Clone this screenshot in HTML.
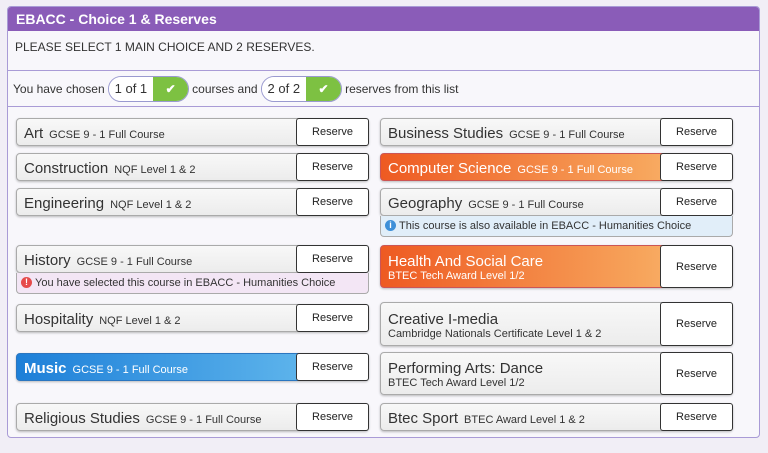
<!DOCTYPE html>
<html><head><style>
*{box-sizing:border-box;margin:0;padding:0}
body{width:768px;height:453px;background:#f1eef6;font-family:"Liberation Sans",sans-serif;position:relative;overflow:hidden}
.panel{position:absolute;left:7px;top:6px;width:753px;height:432px;border:1px solid #a99bd6;border-radius:4px;background:#f8f7fb;overflow:hidden}
.hdr{height:24px;background:#8a5cb8;color:#fff;font-weight:bold;font-size:14px;line-height:24px;padding-left:8px}
.instr{height:40px;border-bottom:1px solid #a99bd6;font-size:12px;color:#333;padding:9px 0 0 7px}
.cnt{height:36px;border-bottom:1px solid #a99bd6;font-size:12px;color:#333;display:flex;align-items:center;padding-left:5px}
.pill{display:inline-flex;height:26px;border:1px solid #9a9ad0;border-radius:13px;overflow:hidden;margin:0 3px;align-items:stretch}
.pill span{padding:0 6px;line-height:24px;font-size:13px;background:#fff}
.pill b{width:35px;background:#7dc142;color:#fff;text-align:center;line-height:24px;font-size:12px}
.card{position:absolute;height:28px;width:353px;border:1px solid #aaa;border-radius:4px;background:linear-gradient(#f8f8f8,#ececec);box-shadow:0 1px 2px rgba(0,0,0,.25)}
.t{position:absolute;left:7px;top:6px;font-size:15px;color:#333;white-space:nowrap}
.t small{font-size:11px;margin-left:6px}
.t2{position:absolute;left:7px;top:20px;font-size:11px;color:#333;white-space:nowrap}
.r{position:absolute;right:-1px;top:-1px;bottom:-1px;width:73px;background:#fff;border:1px solid #333;border-radius:3px;font-size:11px;color:#222;display:flex;align-items:center;justify-content:center}
.or{background:linear-gradient(90deg,#ee5a22,#f7a55c 75%,#fbc07a);border-color:#c55}
.or .t,.or .t2,.bl .t{color:#fff}
.bl{background:linear-gradient(90deg,#1d7fd8,#6cc0f0);border-color:#2b76c0}
.note{position:absolute;height:21px;width:353px;border:1px solid #aaa;border-top:none;border-radius:0 0 4px 4px;font-size:11px;color:#333;line-height:20px;padding-left:18px}
.note i{position:absolute;left:4px;top:4px;width:11px;height:11px;border-radius:50%;color:#fff;font-size:9px;line-height:11px;text-align:center;font-style:normal;font-weight:bold}
</style></head><body>
<div class="panel">
<div class="hdr">EBACC - Choice 1 &amp; Reserves</div>
<div class="instr">PLEASE SELECT 1 MAIN CHOICE AND 2 RESERVES.</div>
<div class="cnt">You have chosen <span class="pill"><span>1 of 1</span><b>✔</b></span> courses and <span class="pill"><span>2 of 2</span><b>✔</b></span> reserves from this list</div>
</div>

<div class="card" style="left:16px;top:118px"><div class="t">Art<small>GCSE 9 - 1 Full Course</small></div><div class="r">Reserve</div></div>
<div class="card" style="left:16px;top:153px"><div class="t">Construction<small>NQF Level 1 &amp; 2</small></div><div class="r">Reserve</div></div>
<div class="card" style="left:16px;top:188px"><div class="t">Engineering<small>NQF Level 1 &amp; 2</small></div><div class="r">Reserve</div></div>
<div class="card" style="left:16px;top:245px"><div class="t">History<small>GCSE 9 - 1 Full Course</small></div><div class="r">Reserve</div></div>
<div class="note" style="left:16px;top:273px;background:#f3e6f5"><i style="background:#e64b4b">!</i>You have selected this course in EBACC - Humanities Choice</div>
<div class="card" style="left:16px;top:304px"><div class="t">Hospitality<small>NQF Level 1 &amp; 2</small></div><div class="r">Reserve</div></div>
<div class="card bl" style="left:16px;top:353px"><div class="t"><b>Music</b><small>GCSE 9 - 1 Full Course</small></div><div class="r">Reserve</div></div>
<div class="card" style="left:16px;top:403px"><div class="t">Religious Studies<small>GCSE 9 - 1 Full Course</small></div><div class="r">Reserve</div></div>

<div class="card" style="left:380px;top:118px"><div class="t">Business Studies<small>GCSE 9 - 1 Full Course</small></div><div class="r">Reserve</div></div>
<div class="card or" style="left:380px;top:153px"><div class="t">Computer Science<small>GCSE 9 - 1 Full Course</small></div><div class="r">Reserve</div></div>
<div class="card" style="left:380px;top:188px"><div class="t">Geography<small>GCSE 9 - 1 Full Course</small></div><div class="r">Reserve</div></div>
<div class="note" style="left:380px;top:216px;background:#e1eef9"><i style="background:#3d8fd8">i</i>This course is also available in EBACC - Humanities Choice</div>
<div class="card or" style="left:380px;top:245px;height:43px"><div class="t" style="top:7px">Health And Social Care</div><div class="t2" style="top:24px">BTEC Tech Award Level 1/2</div><div class="r">Reserve</div></div>
<div class="card" style="left:380px;top:302px;height:44px"><div class="t" style="top:8px">Creative I-media</div><div class="t2" style="top:25px">Cambridge Nationals Certificate Level 1 &amp; 2</div><div class="r">Reserve</div></div>
<div class="card" style="left:380px;top:352px;height:43px"><div class="t" style="top:7px">Performing Arts: Dance</div><div class="t2" style="top:24px">BTEC Tech Award Level 1/2</div><div class="r">Reserve</div></div>
<div class="card" style="left:380px;top:403px"><div class="t">Btec Sport<small>BTEC Award Level 1 &amp; 2</small></div><div class="r">Reserve</div></div>
</body></html>
